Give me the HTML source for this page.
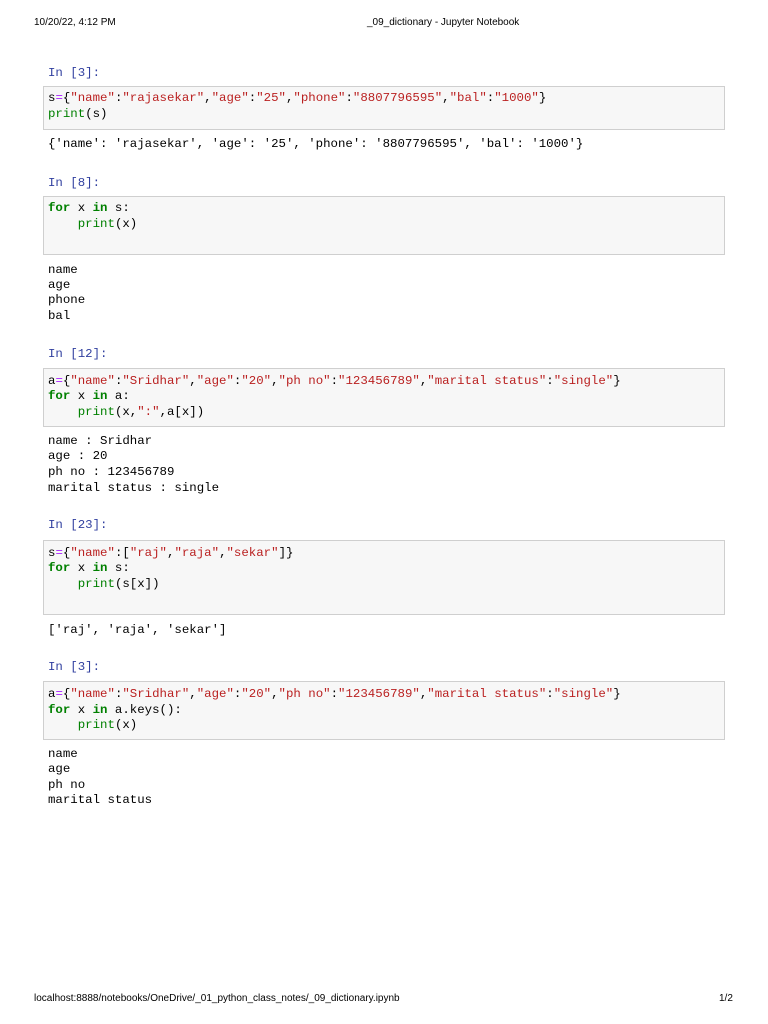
<!DOCTYPE html>
<html><head><meta charset="utf-8"><style>
body{margin:0;width:768px;height:1024px;background:#fff;position:relative;overflow:hidden;font-family:"Liberation Mono",monospace;font-size:12.4px;color:#000}
.hd{position:absolute;font-family:"Liberation Sans",sans-serif;font-size:10px;color:#000;line-height:12px}
.l{position:absolute;left:48px;line-height:16px;white-space:pre}
.p{color:#303f9f}
.b{position:absolute;left:43px;width:682px;border:1px solid #cfcfcf;background:#f7f7f7;box-sizing:border-box}
.k{color:#008000;font-weight:bold}
.f{color:#008000}
.s{color:#ba2121}
.o{color:#aa22ff}
</style></head><body>
<div class="hd" style="left:34px;top:17px">10/20/22, 4:12 PM</div>
<div class="hd" style="left:367px;top:17px">_09_dictionary - Jupyter Notebook</div>
<div class="hd" style="left:34px;top:993px">localhost:8888/notebooks/OneDrive/_01_python_class_notes/_09_dictionary.ipynb</div>
<div class="hd" style="left:719px;top:993px">1/2</div>

<div class="l p" style="top:65px">In [3]:</div>
<div class="b" style="top:86px;height:44px"></div>
<div class="l" style="top:90px">s<span class="o">=</span>{<span class="s">"name"</span>:<span class="s">"rajasekar"</span>,<span class="s">"age"</span>:<span class="s">"25"</span>,<span class="s">"phone"</span>:<span class="s">"8807796595"</span>,<span class="s">"bal"</span>:<span class="s">"1000"</span>}</div>
<div class="l" style="top:106px"><span class="f">print</span>(s)</div>
<div class="l" style="top:136px">{'name': 'rajasekar', 'age': '25', 'phone': '8807796595', 'bal': '1000'}</div>

<div class="l p" style="top:175px">In [8]:</div>
<div class="b" style="top:196px;height:59px"></div>
<div class="l" style="top:200px"><span class="k">for</span> x <span class="k">in</span> s:</div>
<div class="l" style="top:216px">    <span class="f">print</span>(x)</div>
<div class="l" style="top:262px">name</div>
<div class="l" style="top:277px">age</div>
<div class="l" style="top:292px">phone</div>
<div class="l" style="top:308px">bal</div>

<div class="l p" style="top:346px">In [12]:</div>
<div class="b" style="top:368px;height:59px"></div>
<div class="l" style="top:373px">a<span class="o">=</span>{<span class="s">"name"</span>:<span class="s">"Sridhar"</span>,<span class="s">"age"</span>:<span class="s">"20"</span>,<span class="s">"ph no"</span>:<span class="s">"123456789"</span>,<span class="s">"marital status"</span>:<span class="s">"single"</span>}</div>
<div class="l" style="top:388px"><span class="k">for</span> x <span class="k">in</span> a:</div>
<div class="l" style="top:404px">    <span class="f">print</span>(x,<span class="s">":"</span>,a[x])</div>
<div class="l" style="top:433px">name : Sridhar</div>
<div class="l" style="top:448px">age : 20</div>
<div class="l" style="top:464px">ph no : 123456789</div>
<div class="l" style="top:480px">marital status : single</div>

<div class="l p" style="top:517px">In [23]:</div>
<div class="b" style="top:540px;height:75px"></div>
<div class="l" style="top:545px">s<span class="o">=</span>{<span class="s">"name"</span>:[<span class="s">"raj"</span>,<span class="s">"raja"</span>,<span class="s">"sekar"</span>]}</div>
<div class="l" style="top:560px"><span class="k">for</span> x <span class="k">in</span> s:</div>
<div class="l" style="top:576px">    <span class="f">print</span>(s[x])</div>
<div class="l" style="top:622px">['raj', 'raja', 'sekar']</div>

<div class="l p" style="top:659px">In [3]:</div>
<div class="b" style="top:681px;height:59px"></div>
<div class="l" style="top:686px">a<span class="o">=</span>{<span class="s">"name"</span>:<span class="s">"Sridhar"</span>,<span class="s">"age"</span>:<span class="s">"20"</span>,<span class="s">"ph no"</span>:<span class="s">"123456789"</span>,<span class="s">"marital status"</span>:<span class="s">"single"</span>}</div>
<div class="l" style="top:702px"><span class="k">for</span> x <span class="k">in</span> a.keys():</div>
<div class="l" style="top:717px">    <span class="f">print</span>(x)</div>
<div class="l" style="top:746px">name</div>
<div class="l" style="top:761px">age</div>
<div class="l" style="top:777px">ph no</div>
<div class="l" style="top:792px">marital status</div>
</body></html>
